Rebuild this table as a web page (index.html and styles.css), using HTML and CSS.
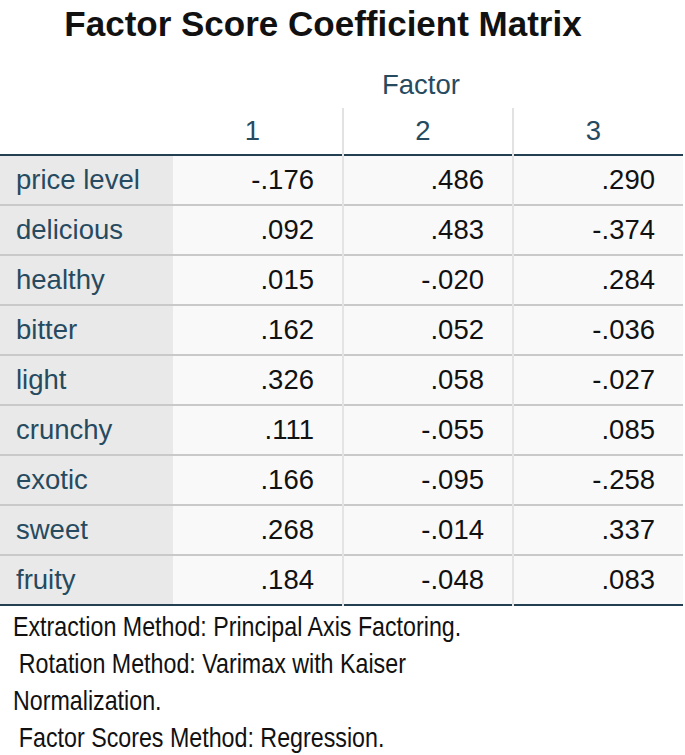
FILE: index.html
```html
<!DOCTYPE html>
<html>
<head>
<meta charset="utf-8">
<link rel="stylesheet" href="styles.css">
</head>
<body>
<div class="title">Factor Score Coefficient Matrix</div>
<table class="matrix">
  <colgroup>
    <col class="c-label"><col class="c-num"><col class="c-num"><col class="c-num">
  </colgroup>
  <thead>
    <tr class="h-group"><th></th><th colspan="3">Factor</th></tr>
    <tr class="h-cols"><th></th><th>1</th><th class="vl">2</th><th class="vl">3</th></tr>
  </thead>
  <tbody>
    <tr><th>price level</th><td>-.176</td><td>.486</td><td>.290</td></tr>
    <tr><th>delicious</th><td>.092</td><td>.483</td><td>-.374</td></tr>
    <tr><th>healthy</th><td>.015</td><td>-.020</td><td>.284</td></tr>
    <tr><th>bitter</th><td>.162</td><td>.052</td><td>-.036</td></tr>
    <tr><th>light</th><td>.326</td><td>.058</td><td>-.027</td></tr>
    <tr><th>crunchy</th><td>.111</td><td>-.055</td><td>.085</td></tr>
    <tr><th>exotic</th><td>.166</td><td>-.095</td><td>-.258</td></tr>
    <tr><th>sweet</th><td>.268</td><td>-.014</td><td>.337</td></tr>
    <tr><th>fruity</th><td>.184</td><td>-.048</td><td>.083</td></tr>
  </tbody>
</table>
<div class="notes">
  <div class="note">Extraction Method: Principal Axis Factoring.</div>
  <div class="note indent">Rotation Method: Varimax with Kaiser</div>
  <div class="note">Normalization.</div>
  <div class="note indent">Factor Scores Method: Regression.</div>
</div>
</body>
</html>
```
FILE: styles.css
```css
html, body {
  margin: 0;
  padding: 0;
  background: #ffffff;
}
body {
  font-family: "Liberation Sans", Arial, sans-serif;
  width: 685px;
}
.title {
  font-weight: bold;
  font-size: 35px;
  line-height: 44px;
  color: #111111;
  padding: 2px 0 0 0;
  width: 646px;
  text-align: center;
}
.matrix {
  border-collapse: collapse;
  table-layout: fixed;
  width: 683px;
  font-size: 27.5px;
  margin-top: 16px;
}
.c-label { width: 173px; }
.c-num { width: 170px; }
.matrix thead th {
  color: #264a60;
  font-weight: normal;
  text-align: center;
  background: #ffffff;
}
.h-group th {
  height: 46px;
  padding: 0;
  vertical-align: middle;
}
.h-group th[colspan] { padding-right: 14px; }
.h-cols th {
  height: 46px;
  padding: 0 10px 0 0;
}
.h-cols th.vl { border-left: 2px solid #e2e2e2; }
.matrix tbody tr { border-top: 2px solid #c9c9c9; }
.matrix tbody tr:first-child { border-top: 2px solid #233f52; }
.matrix tbody tr:last-child { border-bottom: 2px solid #233f52; }
.matrix tbody th {
  background: #e9e9e9;
  color: #264a60;
  font-weight: normal;
  text-align: left;
  padding: 0 0 0 16px;
  height: 48px;
  white-space: nowrap;
}
.matrix tbody td {
  background: #f9f9fa;
  color: #111111;
  text-align: right;
  padding: 0 28px 0 0;
  height: 48px;
}
.matrix tbody td + td { border-left: 2px solid #e4e4e4; }
.notes {
  padding: 2px 0 0 13px;
  color: #111111;
  transform: scaleX(0.83);
  transform-origin: 13px 0;
}
.note {
  font-size: 28px;
  line-height: 37px;
  white-space: nowrap;
}
.note.indent { padding-left: 7px; }
```
